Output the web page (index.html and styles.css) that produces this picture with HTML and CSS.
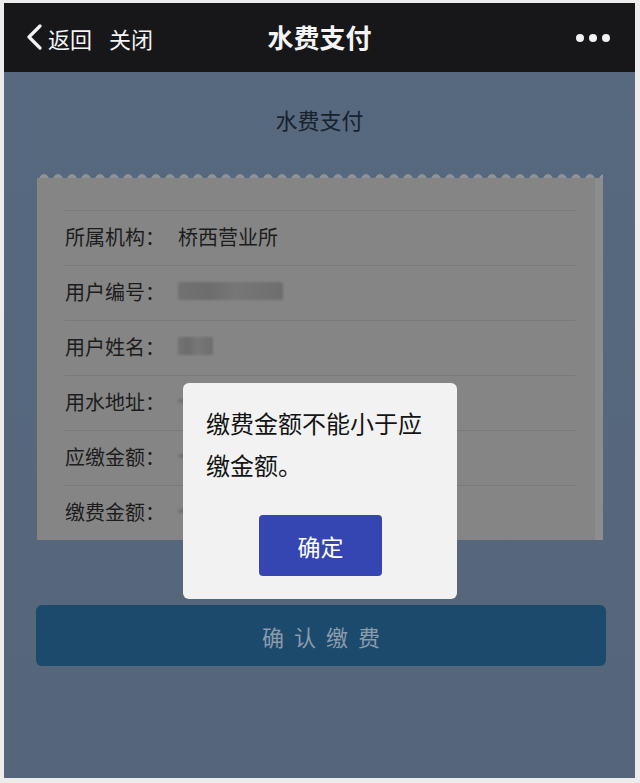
FILE: index.html
```html
<!DOCTYPE html>
<html lang="zh-CN">
<head>
<meta charset="utf-8">
<title>水费支付</title>
<link rel="stylesheet" href="styles.css">
</head>
<body>
<div class="frame">
  <div class="screen">
    <header class="topbar">
      <div class="nav-left">
        <svg class="chev" width="18" height="26" viewBox="0 0 18 26"><path d="M15 2 L4 13 L15 24" fill="none" stroke="#f2f2f2" stroke-width="3.2" stroke-linecap="round" stroke-linejoin="round"/></svg>
        <span class="back">返回</span>
        <span class="close">关闭</span>
      </div>
      <div class="title">水费支付</div>
      <div class="dots"><i></i><i></i><i></i></div>
    </header>
    <main class="main">
      <div class="subtitle">水费支付</div>
      <section class="card">
        <div class="edge"></div>
        <div class="card-body">
          <div class="row"><span class="label">所属机构：</span><span class="value">桥西营业所</span></div>
          <div class="row"><span class="label">用户编号：</span><span class="blur blur-long"></span></div>
          <div class="row"><span class="label">用户姓名：</span><span class="blur blur-short"></span></div>
          <div class="row"><span class="label">用水地址：</span><span class="blur blur-mid"></span></div>
          <div class="row"><span class="label">应缴金额：</span><span class="blur blur-mid"></span></div>
          <div class="row"><span class="label">缴费金额：</span><span class="blur blur-mid"></span></div>
        </div>
      </section>
      <div class="pay-btn">确认缴费</div>
    </main>
    <div class="dialog">
      <p class="msg">缴费金额不能小于应缴金额。</p>
      <div class="ok">确定</div>
    </div>
  </div>
</div>
</body>
</html>
```
FILE: styles.css
```css
* { box-sizing: border-box; }
html, body { margin: 0; padding: 0; }
body {
  width: 640px;
  height: 783px;
  background: #ececec;
  font-family: "Noto Sans CJK SC", "Noto Sans", sans-serif;
  overflow: hidden;
}
.frame {
  width: 640px;
  height: 783px;
  padding: 3px 5px 5px 4px;
  background: #ececec;
}
.screen {
  position: relative;
  width: 100%;
  height: 100%;
  display: flex;
  flex-direction: column;
  background: #56687d;
}
.topbar {
  height: 69px;
  background: #171719;
  display: flex;
  align-items: center;
  position: relative;
  color: #f4f4f4;
}
.nav-left {
  display: flex;
  align-items: center;
  padding-left: 21px;
  font-size: 22px;
  line-height: 30px;
}
.chev { display: block; margin-right: 5px; margin-top: -1px; }
.back { margin-right: 17px; }
.title {
  position: absolute;
  left: 0;
  right: 0;
  top: 0;
  height: 69px;
  line-height: 67px;
  text-align: center;
  font-size: 26px;
  font-weight: 700;
  pointer-events: none;
}
.dots {
  margin-left: auto;
  margin-right: 25px;
  display: flex;
  gap: 5px;
}
.dots i {
  display: block;
  width: 8px;
  height: 8px;
  border-radius: 50%;
  background: #f2f2f2;
}
.main {
  flex: 1;
  display: flex;
  flex-direction: column;
  background: linear-gradient(#57697f, #55667a);
}
.subtitle {
  margin-top: 32px;
  height: 30px;
  line-height: 30px;
  text-align: center;
  font-size: 22px;
  color: #18222e;
}
.card {
  margin: 38px 32px 0 33px;
  display: flex;
  flex-direction: column;
}
.edge {
  height: 6px;
  background: radial-gradient(circle at 7px 7px, #8f9296 4.5px, transparent 5px) repeat-x;
  background-size: 14px 7px;
}
.card-body {
  background: #858585;
  padding-top: 32px;
  border-right: 8px solid #8c8d8f;
}
.row {
  height: 55px;
  margin: 0 20px 0 28px;
  border-top: 1px solid #7a7a7a;
  display: flex;
  align-items: center;
  padding-bottom: 4px;
  font-size: 20px;
  color: #1c1c1c;
}
.label {
  width: 113px;
  flex: none;
}
.value { color: #1c1c1c; }
.blur {
  display: block;
  height: 18px;
  border-radius: 2px;
  filter: blur(1px);
  background: linear-gradient(90deg, #727272, #6d6d6d 30%, #777 55%, #6e6e6e);
}
.blur-long { width: 105px; }
.blur-short { width: 35px; }
.blur-mid { width: 60px; height: 4px; }
.pay-btn {
  margin: 65px 29px 0 32px;
  height: 61px;
  border-radius: 6px;
  background: #1c4a6d;
  color: #8a9bab;
  font-size: 22px;
  letter-spacing: 10px;
  padding-left: 10px;
  display: flex;
  align-items: center;
  justify-content: center;
}
.dialog {
  position: absolute;
  left: 179px;
  top: 380px;
  width: 274px;
  height: 216px;
  background: #f2f2f2;
  border-radius: 6px;
  padding: 19px 22px 0 23px;
  display: flex;
  flex-direction: column;
  align-items: center;
}
.msg {
  margin: 0;
  width: 100%;
  font-size: 24px;
  line-height: 42px;
  color: #141414;
}
.ok {
  margin-top: 29px;
  width: 123px;
  height: 61px;
  border-radius: 4px;
  background: #3546b2;
  color: #fff;
  font-size: 23px;
  display: flex;
  align-items: center;
  justify-content: center;
}
```
